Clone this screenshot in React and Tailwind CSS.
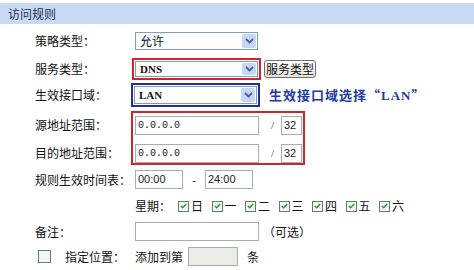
const cjk = { fontFamily: '"Noto Sans CJK SC", "Noto Sans", sans-serif' }

const Chevron = () => (
  <svg width="9" height="6" viewBox="0 0 9 6">
    <path d="M1 1 L4.5 4.5 L8 1" fill="none" stroke="#4d6185" strokeWidth="1.8" />
  </svg>
)

const Select = ({ value, serif }) => (
  <div className="flex h-[18px] w-[123px] items-stretch border border-[#7f9db9] bg-white">
    <div
      className={`flex flex-1 items-center pl-[4px] ${serif ? "text-[11px] font-bold" : "text-[12px]"} text-[#111]`}
      style={serif ? { fontFamily: '"Liberation Serif", serif' } : cjk}
    >
      {value}
    </div>
    <div className="m-px flex w-[14px] items-center justify-center rounded-[2px] bg-[#c6d5fa]">
      <Chevron />
    </div>
  </div>
)

const TextInput = ({ w, value, mono, gray }) => (
  <div
    className={`flex h-[19px] items-center border border-[#a5acb2] pl-[2px] ${gray ? "bg-[#ecece6]" : "bg-white"} text-[#222]`}
    style={{ width: w, fontFamily: mono ? '"Liberation Mono", monospace' : '"Liberation Sans", Arial, sans-serif', fontSize: mono ? 10 : 11 }}
  >
    {value}
  </div>
)

const Check = ({ checked }) => (
  <div className="flex h-[11px] w-[11px] items-center justify-center border border-[#5f7f72] bg-[#f4f7f2]">
    {checked && (
      <svg width="7" height="6" viewBox="0 0 7 6">
        <path d="M0.8 3 L2.7 4.8 L6.2 1" fill="none" stroke="#2a9a2a" strokeWidth="1.5" />
      </svg>
    )}
  </div>
)

const Label = ({ children }) => (
  <div className="w-[100px] shrink-0 text-[12px] text-[#111]" style={cjk}>
    {children}
  </div>
)

export default function App() {
  const days = ["日", "一", "二", "三", "四", "五", "六"]

  return (
    <div className="h-[270px] w-[474px] overflow-hidden bg-white pt-[3px]" style={cjk}>
      <div className="flex h-[21px] items-center bg-[#c7daf5] pl-[8px] text-[12px] text-[#1d2c48]">访问规则</div>

      <div className="pl-[35px]">
        {/* 策略类型 */}
        <div className="flex h-[34px] items-center">
          <Label>策略类型：</Label>
          <Select value="允许" />
        </div>

        {/* 服务类型 */}
        <div className="flex h-[22px] items-center">
          <Label>服务类型：</Label>
          <div className="-ml-[3px] border-2 border-[#d2232a] p-px">
            <div className="h-[16px] [&>div]:h-[16px]">
              <Select value="DNS" serif />
            </div>
          </div>
          <div className="ml-[3px] flex h-[18px] w-[52px] items-center justify-center rounded-[3px] border border-[#6f6f6f] bg-gradient-to-b from-white to-[#e6e3d6] text-[12px] text-[#111]">
            服务类型
          </div>
        </div>

        {/* 生效接口域 */}
        <div className="flex h-[30px] items-center">
          <Label>生效接口域：</Label>
          <div className="-ml-[4px] border-2 border-[#1e2f9c] p-px">
            <Select value="LAN" serif />
          </div>
          <div className="ml-[9px] text-[13px] font-bold tracking-[1px] text-[#1f3aa6]">
            生效接口域选择“<span style={{ fontFamily: '"Liberation Serif", serif' }}>LAN</span>”
          </div>
        </div>

        {/* 地址范围 */}
        <div className="flex items-start pt-px">
          <div className="flex flex-col">
            <div className="flex h-[28px] items-center">
              <Label>源地址范围：</Label>
            </div>
            <div className="flex h-[28px] items-center">
              <Label>目的地址范围：</Label>
            </div>
          </div>
          <div className="-ml-[4px] flex flex-col gap-[9px] border-2 border-[#d2232a] pb-0 pl-[2px] pr-px pt-[3px]">
            {[0, 1].map((i) => (
              <div key={i} className="flex items-center">
                <TextInput w={124} value="0.0.0.0" mono />
                <span className="ml-[12px] w-[10px] text-[11px] text-[#333]" style={{ fontFamily: '"Liberation Serif", serif' }}>
                  /
                </span>
                <TextInput w={21} value="32" />
              </div>
            ))}
          </div>
        </div>

        {/* 时间 */}
        <div className="flex h-[25px] items-center">
          <Label>规则生效时间表：</Label>
          <TextInput w={48} value="00:00" />
          <span className="w-[22px] text-center text-[12px] text-[#222]">-</span>
          <TextInput w={48} value="24:00" />
        </div>

        {/* 星期 */}
        <div className="flex h-[28px] items-center">
          <div className="w-[100px] shrink-0" />
          <span className="mr-[7px] text-[12px] text-[#111]">星期：</span>
          {days.map((d) => (
            <div key={d} className="flex w-[33.5px] items-center gap-[2px]">
              <Check checked />
              <span className="text-[12px] text-[#111]">{d}</span>
            </div>
          ))}
        </div>

        {/* 备注 */}
        <div className="flex h-[23px] items-center">
          <Label>备注：</Label>
          <TextInput w={124} value="" />
          <span className="ml-[4px] text-[12px] text-[#111]">（可选）</span>
        </div>

        {/* 指定位置 */}
        <div className="flex h-[27px] items-center">
          <div className="flex w-[100px] shrink-0 items-center">
            <div className="ml-[3px] h-[13px] w-[13px] border border-[#5f7f8a] bg-[#f2f5f6]" />
            <span className="ml-[14px] text-[12px] text-[#111]">指定位置：</span>
          </div>
          <span className="text-[12px] text-[#111]">添加到第</span>
          <div className="ml-[5px]">
            <TextInput w={50} value="" gray />
          </div>
          <span className="ml-[9px] text-[12px] text-[#111]">条</span>
        </div>
      </div>
    </div>
  )
}
